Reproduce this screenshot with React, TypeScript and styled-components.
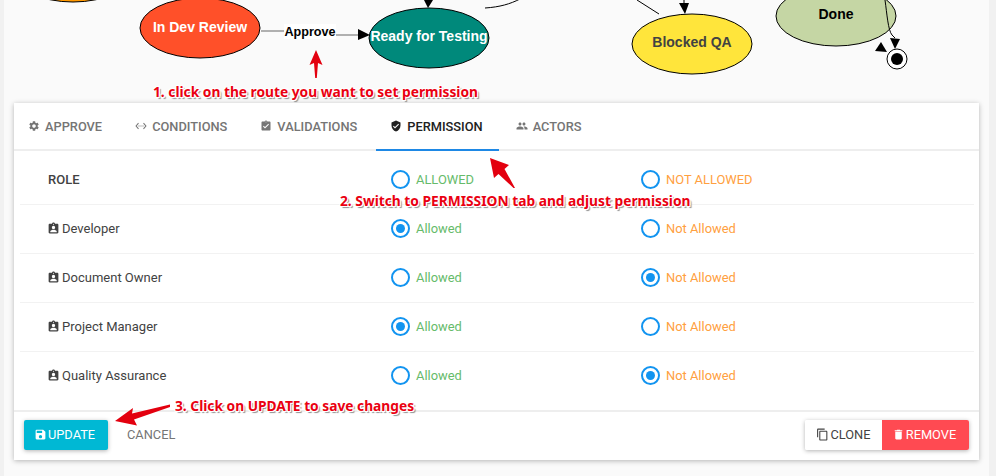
import React from "react";
import styled, { createGlobalStyle } from "styled-components";
import {
  MdSettings,
  MdSettingsEthernet,
  MdAssignmentTurnedIn,
  MdVerifiedUser,
  MdPeople,
  MdAssignmentInd,
  MdSave,
  MdContentCopy,
  MdDelete,
} from "react-icons/md";

const Global = createGlobalStyle`
  html, body { margin: 0; padding: 0; background: #f3f3f3; }
  * { box-sizing: border-box; }
`;

const Page = styled.div`
  position: relative;
  width: 996px;
  height: 476px;
  overflow: hidden;
  padding: 0 7px 0 4px;
  background: #f1f1f1;
  font-family: Roboto, "Liberation Sans", sans-serif;
`;

const Content = styled.div`
  width: 100%;
  height: 100%;
  background: #fafafa;
  display: flex;
  flex-direction: column;
  padding: 0 10px;
`;

const Canvas = styled.svg`
  display: block;
  flex: none;
  position: absolute;
  left: 0;
  top: 0;
  font-family: "Liberation Sans", Arial, sans-serif;
  font-weight: 700;
`;

const Spacer = styled.div`
  flex: none;
  height: 103px;
`;

const Card = styled.section`
  flex: none;
  width: 965px;
  height: 357px;
  background: #fff;
  box-shadow: 0 1px 5px rgba(0, 0, 0, 0.28);
  display: flex;
  flex-direction: column;
`;

const Tabs = styled.nav`
  flex: none;
  height: 48px;
  display: flex;
  gap: 3px;
  border-bottom: 2px solid #eeeeee;
`;

const Tab = styled.div<{ $active?: boolean }>`
  height: 48px;
  padding: 0 16px 0 14px;
  display: flex;
  align-items: center;
  gap: 5px;
  font-size: 12.82px;
  font-weight: 500;
  color: ${(p) => (p.$active ? "#212121" : "#757575")};
  border-bottom: 2px solid ${(p) => (p.$active ? "#1e88e5" : "transparent")};
  svg {
    font-size: 12px;
    flex: none;
    color: ${(p) => (p.$active ? "#212121" : "#757575")};
  }
`;

const Table = styled.div`
  flex: none;
  height: 259px;
  padding: 5px 5px 0 6px;
`;

const Row = styled.div`
  height: 49px;
  padding-bottom: 2px;
  display: grid;
  grid-template-columns: 371px 250px 1fr;
  align-items: center;
  border-bottom: 1px solid #f2f2f2;
  &:last-child {
    border-bottom-color: transparent;
  }
`;

const Role = styled.div<{ $head?: boolean }>`
  display: flex;
  align-items: center;
  gap: 2px;
  padding-left: 28px;
  font-size: 13px;
  font-weight: ${(p) => (p.$head ? 500 : 400)};
  color: #424242;
  svg {
    font-size: 13px;
    color: #424242;
    margin-left: -1px;
  }
`;

const Choice = styled.label<{ $tone: string }>`
  display: flex;
  align-items: center;
  gap: 6px;
  font-size: 12.9px;
  color: ${(p) => p.$tone};
`;

const Radio = styled.span<{ $on?: boolean }>`
  width: 19px;
  height: 19px;
  border-radius: 50%;
  border: 2px solid #1294f0;
  display: flex;
  align-items: center;
  justify-content: center;
  &::after {
    content: "";
    width: 9px;
    height: 9px;
    border-radius: 50%;
    background: ${(p) => (p.$on ? "#1294f0" : "transparent")};
  }
`;

const Footer = styled.footer`
  flex: none;
  height: 50px;
  border-top: 2px solid #eeeeee;
  padding: 8px 10px 0 10px;
  display: flex;
  align-items: flex-start;
`;

const Update = styled.button`
  width: 84px;
  height: 30px;
  border: none;
  border-radius: 2px;
  background: #00b8d4;
  color: #fff;
  font: 400 12.8px Roboto, sans-serif;
  display: flex;
  align-items: center;
  gap: 1px;
  padding: 0 0 2px 10px;
  box-shadow: 0 1px 4px rgba(0, 0, 0, 0.3);
  svg { font-size: 13px; flex: none; }
`;

const Cancel = styled.button`
  margin-left: 19px;
  height: 30px;
  border: none;
  background: transparent;
  color: #757575;
  font: 400 12.8px Roboto, sans-serif;
  padding: 0 0 2px;
`;

const Group = styled.div`
  margin-left: auto;
  display: flex;
  height: 30px;
  border-radius: 2px;
  box-shadow: 0 1px 4px rgba(0, 0, 0, 0.3);
  overflow: hidden;
`;

const Clone = styled.button`
  width: 77px;
  border: none;
  background: #fff;
  color: #424242;
  font: 400 12.8px Roboto, sans-serif;
  display: flex;
  align-items: center;
  justify-content: center;
  gap: 1px;
  padding: 0 0 2px;
  svg { font-size: 13px; flex: none; }
`;

const Remove = styled(Clone)`
  width: 87px;
  padding-right: 3px;
  background: #ff4a52;
  color: #fff;
`;

const Note = styled.div<{ $x: number; $y: number }>`
  position: absolute;
  left: ${(p) => p.$x}px;
  top: ${(p) => p.$y}px;
  font-family: "Noto Sans", sans-serif;
  font-weight: 700;
  font-size: 13.76px;
  line-height: 18px;
  white-space: nowrap;
  color: #ea0011;
  text-shadow: 1px 1px 0 #fff, -1px -1px 0 #fff, 1px -1px 0 #fff, -1px 1px 0 #fff, 2px 2px 1px #8f8f8f;
`;

const Overlay = styled.svg`
  position: absolute;
  left: 0;
  top: 0;
  pointer-events: none;
`;

const Rows = [
  { name: "Developer", allowed: true },
  { name: "Document Owner", allowed: false },
  { name: "Project Manager", allowed: true },
  { name: "Quality Assurance", allowed: false },
];

const GREEN = "#66bb6a";
const ORANGE = "#ffa040";

function Diagram() {
  const label = { textAnchor: "middle" as const, fontSize: 14 };
  return (
    <Canvas width={996} height={103} viewBox="0 0 996 103">
      <ellipse cx={73} cy={-28} rx={60} ry={30} fill="#ff9800" stroke="#000" />
      <ellipse cx={200} cy={28} rx={60} ry={30} fill="#ff5029" stroke="#000" />
      <text x={200} y={32} fill="#fff" {...label}>In Dev Review</text>
      <path d="M261 31H285" stroke="#666" strokeWidth={1} fill="none" />
      <rect x={284} y={24} width={52} height={15} fill="#fff" />
      <text x={310} y={36} fill="#000" textAnchor="middle" fontSize={12.6}>Approve</text>
      <path d="M336 35H359" stroke="#666" strokeWidth={1} fill="none" />
      <path d="M358 29L370 35L358 40Z" fill="#000" />
      <ellipse cx={429} cy={38} rx={60} ry={30} fill="#00897b" stroke="#000" />
      <text x={429} y={41} fill="#fff" {...label}>Ready for Testing</text>
      <path d="M424 0L433 0L428 8Z" fill="#000" />
      <path d="M485 8C500 7 510 4 520 -1" stroke="#000" fill="none" />
      <path d="M637 0L659 14" stroke="#000" fill="none" />
      <path d="M684 0V6" stroke="#000" fill="none" />
      <path d="M679 3L689 3L685 14Z" fill="#000" />
      <ellipse cx={692} cy={44} rx={60} ry={30} fill="#ffe53b" stroke="#000" />
      <text x={692} y={47} fill="#424242" {...label}>Blocked QA</text>
      <ellipse cx={836} cy={16} rx={60} ry={30} fill="#c5d6a4" stroke="#000" />
      <text x={836} y={19} fill="#000" {...label}>Done</text>
      <path d="M885 0C887 14 888 30 892 35L895 38" stroke="#000" fill="none" />
      <path d="M890 38L900 39L895 49Z" fill="#000" />
      <path d="M881 42L875 51L887 52Z" fill="#000" />
      <circle cx={897} cy={59} r={10} fill="#fff" stroke="#000" />
      <circle cx={897} cy={59} r={6} fill="#000" />
    </Canvas>
  );
}

function Arrows() {
  return (
    <Overlay width={996} height={476} viewBox="0 0 996 476">
      <path d="M316 50L322.5 65L318 63L316.8 78H315.2L314 63L309.5 65Z" fill="#e3000f" />
      <path d="M490 158L509 165L504.5 169L515 188L513.5 188L498.5 174L494 178Z" fill="#e3000f" />
      <path d="M115 421L133 408L132 413.5L170 404.5V407L134 419.5L137 425.5Z" fill="#e3000f" />
    </Overlay>
  );
}

export default function App() {
  return (
    <Page>
      <Global />
      <Content>
        <Spacer />
        <Card>
          <Tabs>
            <Tab><MdSettings />APPROVE</Tab>
            <Tab><MdSettingsEthernet />CONDITIONS</Tab>
            <Tab><MdAssignmentTurnedIn />VALIDATIONS</Tab>
            <Tab $active><MdVerifiedUser />PERMISSION</Tab>
            <Tab><MdPeople />ACTORS</Tab>
          </Tabs>
          <Table>
            <Row>
              <Role $head>ROLE</Role>
              <Choice $tone={GREEN}><Radio />ALLOWED</Choice>
              <Choice $tone={ORANGE}><Radio />NOT ALLOWED</Choice>
            </Row>
            {Rows.map((r) => (
              <Row key={r.name}>
                <Role><MdAssignmentInd />{r.name}</Role>
                <Choice $tone={GREEN}><Radio $on={r.allowed} />Allowed</Choice>
                <Choice $tone={ORANGE}><Radio $on={!r.allowed} />Not Allowed</Choice>
              </Row>
            ))}
          </Table>
          <Footer>
            <Update><MdSave />UPDATE</Update>
            <Cancel>CANCEL</Cancel>
            <Group>
              <Clone><MdContentCopy />CLONE</Clone>
              <Remove><MdDelete />REMOVE</Remove>
            </Group>
          </Footer>
        </Card>
      </Content>
      <Diagram />
      <Arrows />
      <Note $x={153} $y={83}>1. click on the route you want to set permission</Note>
      <Note $x={340} $y={192}>2. Switch to PERMISSION tab and adjust permission</Note>
      <Note $x={175} $y={397}>3. Click on UPDATE to save changes</Note>
    </Page>
  );
}
